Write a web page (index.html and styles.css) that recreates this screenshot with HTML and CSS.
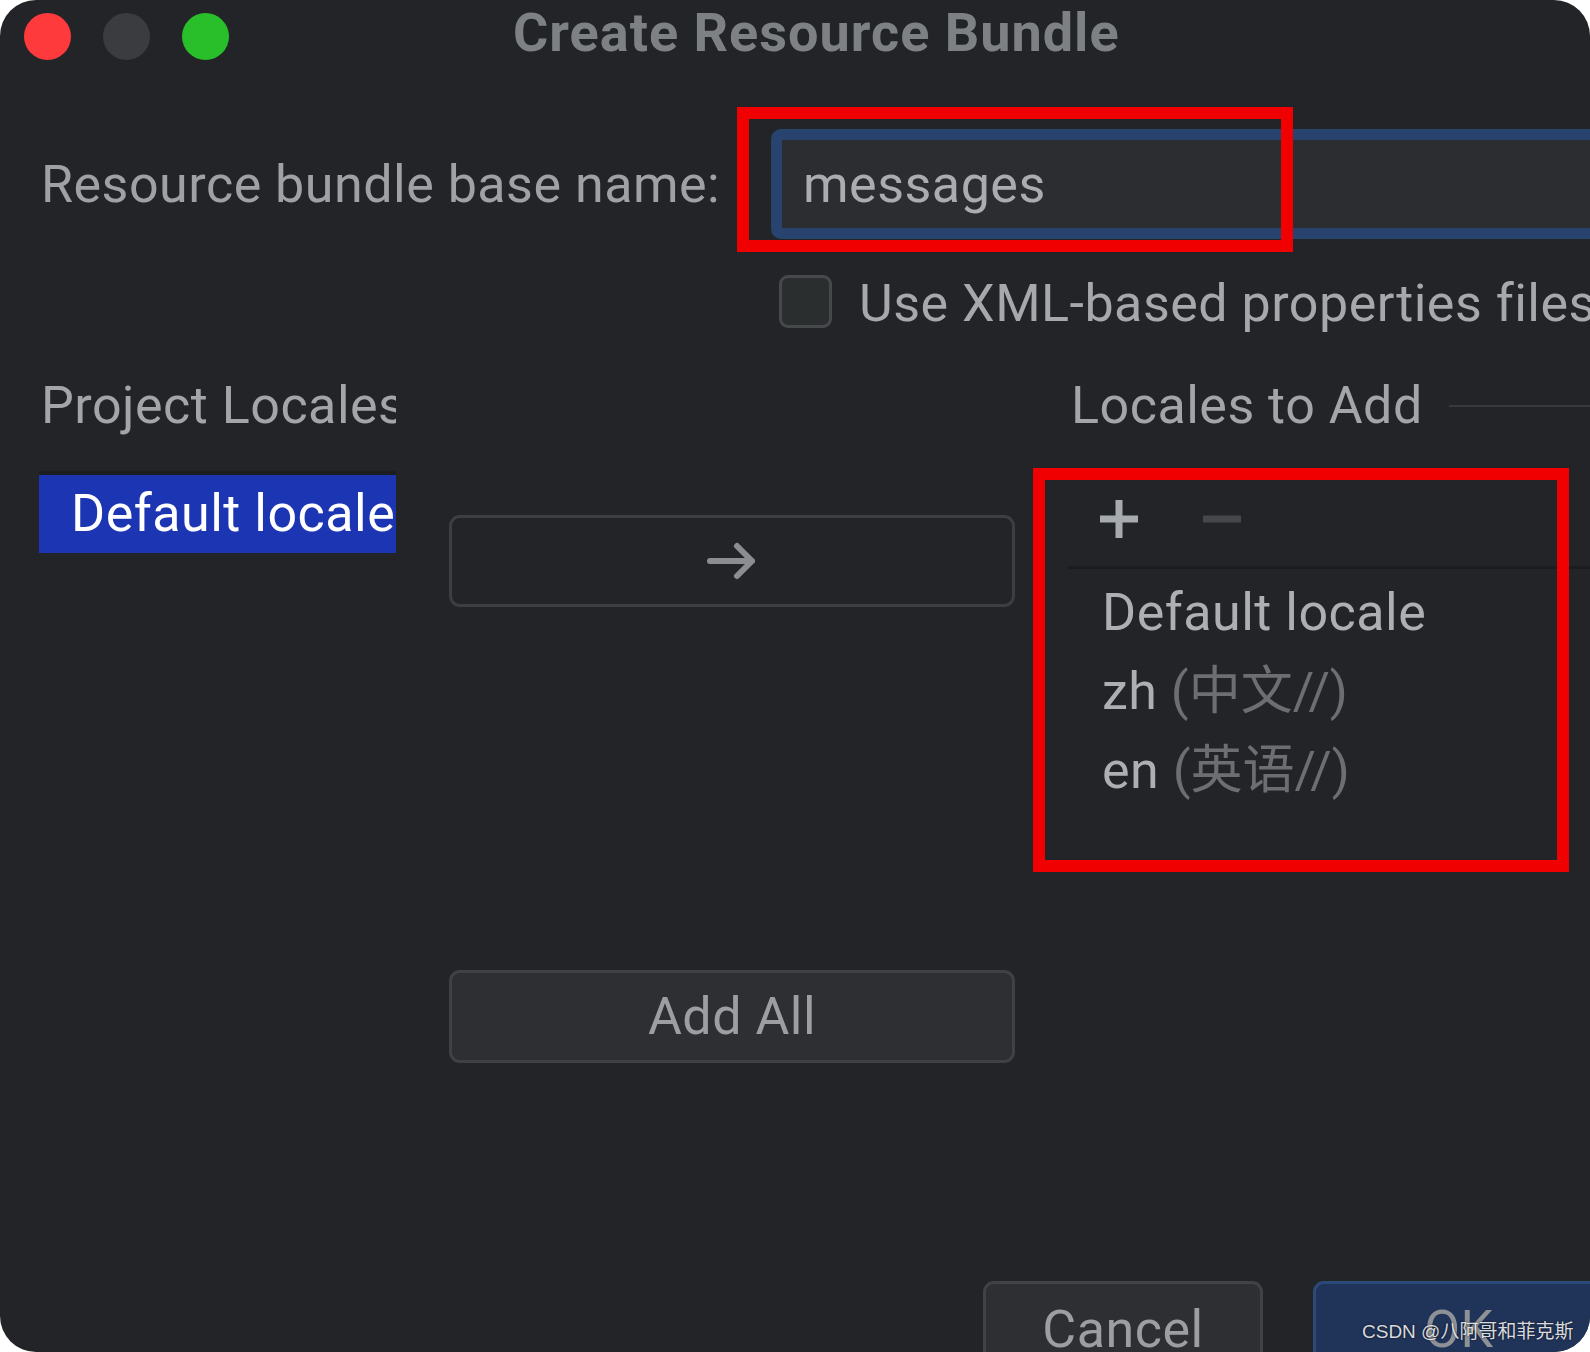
FILE: index.html
```html
<!DOCTYPE html>
<html lang="en">
<head>
    <meta charset="UTF-8">
    <meta name="viewport" content="width=device-width, initial-scale=1.0">
    <title>Create Resource Bundle</title>
    <link rel="stylesheet" href="styles.css">
</head>
<body>
    <div class="window">
        <div class="titlebar">
            <div class="lights">
                <span class="light red"></span>
                <span class="light gray"></span>
                <span class="light green"></span>
            </div>
            <div class="title">Create Resource Bundle</div>
        </div>

        <div class="name-row">
            <label class="label">Resource bundle base name:</label>
            <div class="field">messages</div>
        </div>

        <div class="check-row">
            <span class="checkbox"></span>
            <span class="check-text">Use XML-based properties files</span>
        </div>

        <div class="locales">
            <div class="head head-left">Project Locales</div>
            <div></div>
            <div></div>
            <div></div>
            <div class="head head-right">
                <span>Locales to Add</span>
                <span class="head-line"></span>
            </div>

            <div class="project-list">
                <div class="list-item selected">Default locale</div>
            </div>
            <div></div>
            <div class="actions">
                <button class="btn btn-arrow">
                    <svg width="54" height="40" viewBox="0 0 54 40">
                        <path d="M5 20 H47 M32 5 L47 20 L32 35" fill="none" stroke="#8b8d90" stroke-width="6" stroke-linecap="round" stroke-linejoin="round"/>
                    </svg>
                </button>
                <button class="btn btn-all">Add All</button>
            </div>
            <div></div>
            <div class="add-list">
                <div class="toolbar">
                    <svg class="tool" width="40" height="40" viewBox="0 0 40 40">
                        <path d="M20 1 V39 M1 20 H39" stroke="#a8abae" stroke-width="7"/>
                    </svg>
                    <svg class="tool" width="40" height="40" viewBox="0 0 40 40">
                        <path d="M1 20 H39" stroke="#45474a" stroke-width="7"/>
                    </svg>
                </div>
                <div class="add-item">Default locale</div>
                <div class="add-item">zh <span class="dim">(中文//)</span></div>
                <div class="add-item">en <span class="dim">(英语//)</span></div>
            </div>
        </div>

        <div class="footer">
            <button class="btn btn-cancel">Cancel</button>
            <button class="btn btn-ok">OK</button>
        </div>

        <div class="mark mark-name"></div>
        <div class="mark mark-list"></div>
        <div class="watermark">CSDN @八阿哥和菲克斯</div>
    </div>
</body>
</html>
```

FILE: styles.css
```css
body {
    margin: 0;
    background-color: #ffffff;
}

.window {
    position: relative;
    width: 1590px;
    height: 1352px;
    background-color: #232428;
    border-radius: 36px;
    overflow: hidden;
    font-family: Roboto, "Noto Sans CJK SC", sans-serif;
    font-size: 52px;
    letter-spacing: 0.5px;
    color: #a3a5a8;
}

.titlebar {
    height: 72px;
    display: flex;
    align-items: center;
    padding-left: 24px;
}

.lights {
    display: flex;
    gap: 32px;
}

.light {
    width: 47px;
    height: 47px;
    border-radius: 50%;
}

.red { background-color: #fe3a3d; }
.gray { background-color: #3b3c3f; }
.green { background-color: #28bf2a; }

.title {
    margin-left: 284px;
    margin-bottom: 6px;
    font-size: 54px;
    font-weight: 700;
    letter-spacing: 1px;
    line-height: 1;
    color: #7e8184;
    white-space: nowrap;
}

.name-row {
    display: grid;
    grid-template-columns: 730px 1fr;
    align-items: center;
    margin-top: 57px;
    padding-left: 41px;
}

.label {
    color: #9fa1a4;
    white-space: nowrap;
}

.field {
    width: 900px;
    height: 88px;
    display: flex;
    align-items: center;
    padding-left: 21px;
    background-color: #2b2d30;
    border: 11px solid #27436e;
    border-radius: 10px;
    color: #aaacaf;
}

.check-row {
    display: flex;
    align-items: center;
    height: 53px;
    line-height: 53px;
    margin-top: 36px;
    padding-left: 779px;
    white-space: nowrap;
}

.checkbox {
    width: 47px;
    height: 47px;
    flex: none;
    background-color: #2a2e2f;
    border: 3px solid #46484b;
    border-radius: 9px;
}

.check-text {
    margin-left: 27px;
    padding-top: 4px;
    color: #a6a8ab;
}

.locales {
    display: grid;
    grid-template-columns: 357px 53px 566px 53px 1fr;
    grid-template-rows: 60px auto;
    margin-top: 48px;
    padding-left: 39px;
    row-gap: 35px;
}

.head {
    line-height: 60px;
    white-space: nowrap;
    overflow: hidden;
}

.head-left {
    padding-left: 2px;
}

.head-right {
    display: flex;
    align-items: center;
    padding-left: 3px;
}

.head-line {
    flex: 1;
    height: 2px;
    margin-left: 26px;
    background-color: #38393d;
}

.project-list {
    border-top: 4px solid #1c1d20;
}

.list-item {
    height: 78px;
    line-height: 78px;
    padding-left: 32px;
    white-space: nowrap;
    overflow: hidden;
}

.selected {
    background-color: #1c36b3;
    color: #ffffff;
}

.actions {
    display: flex;
    flex-direction: column;
    padding-top: 44px;
}

.btn {
    font-family: inherit;
    font-size: 52px;
    letter-spacing: 0.5px;
    border-radius: 11px;
    display: flex;
    align-items: center;
    justify-content: center;
    padding: 0;
}

.btn-arrow {
    height: 92px;
    background-color: #232428;
    border: 3px solid #3c3e41;
}

.btn-all {
    height: 93px;
    margin-top: 363px;
    background-color: #2e2f32;
    border: 3px solid #3f4144;
    color: #9c9ea1;
}

.add-list {
    margin-right: -20px;
}

.toolbar {
    height: 95px;
    display: flex;
    align-items: center;
    gap: 63px;
    padding-left: 31px;
    border-bottom: 3px solid #1b1c1f;
}

.add-item {
    height: 79px;
    line-height: 79px;
    padding-left: 34px;
    color: #adafb2;
    white-space: nowrap;
}

.toolbar + .add-item {
    margin-top: 4px;
}

.dim {
    color: #6c6e71;
    letter-spacing: 0;
}

.footer {
    display: flex;
    gap: 50px;
    margin-top: 218px;
    padding-left: 983px;
}

.btn-cancel {
    width: 280px;
    height: 96px;
    flex: none;
    background-color: #2e2f32;
    border: 3px solid #404245;
    color: #9c9ea1;
}

.btn-ok {
    width: 292px;
    height: 96px;
    flex: none;
    background-color: #203358;
    border: 3px solid #2b4a78;
    color: #8e9195;
}

.mark {
    position: absolute;
    border: 12px solid #f00000;
}

.mark-name {
    left: 737px;
    top: 107px;
    width: 532px;
    height: 121px;
}

.mark-list {
    left: 1033px;
    top: 468px;
    width: 512px;
    height: 380px;
}

.watermark {
    position: absolute;
    left: 1362px;
    top: 1319px;
    font-family: "Liberation Sans", "Noto Sans CJK SC", sans-serif;
    font-size: 19px;
    letter-spacing: 0;
    line-height: 26px;
    color: rgba(255, 255, 255, 0.85);
    text-shadow: 0 0 2px rgba(0, 0, 0, 0.8);
    white-space: nowrap;
}
```
